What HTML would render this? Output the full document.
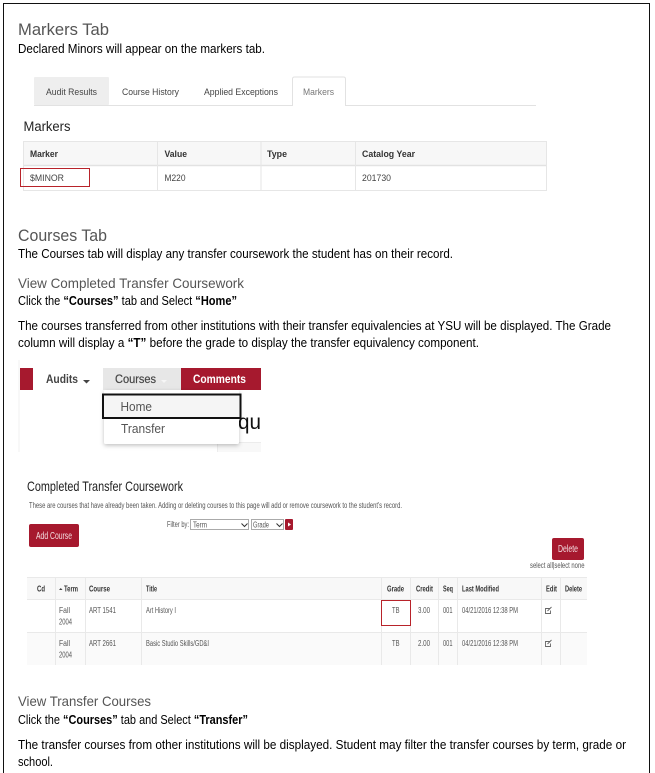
<!DOCTYPE html>
<html lang="en">
<head>
<meta charset="utf-8">
<title>Markers and Courses Tab</title>
<style>
html,body{margin:0;padding:0;background:#fff;width:655px;height:773px;overflow:hidden}
svg{display:block;font-family:"Liberation Sans",sans-serif}
text{white-space:pre;filter:blur(.25px)}
.h{fill:#555;font-size:16.5px}
.h2{fill:#555;font-size:14px}
.p{fill:#000;font-size:12.5px}
.t{fill:#444;font-size:9.5px}
.th{fill:#333;font-size:9px;font-weight:bold}
.s{fill:#555;font-size:8px}
.sb{fill:#333;font-size:8px;font-weight:bold}
</style>
</head>
<body>
<svg width="655" height="773" viewBox="0 0 655 773" xmlns="http://www.w3.org/2000/svg">
<defs>
<filter id="sh" x="-10%" y="-10%" width="120%" height="125%"><feDropShadow dx="0" dy="1.5" stdDeviation="2" flood-color="#000" flood-opacity=".25"/></filter>
</defs>
<rect width="655" height="773" fill="#fff"/>
<path d="M3.500 773V3.500H649.500V773" fill="none" stroke="#111" stroke-width="1"/>

<text class="h" x="18" y="35" textLength="91" lengthAdjust="spacingAndGlyphs">Markers Tab</text>
<text class="p" x="18" y="53" textLength="247" lengthAdjust="spacingAndGlyphs">Declared Minors will appear on the markers tab.</text>

<rect x="34" y="77" width="75" height="28" rx="1" fill="#eee"/>
<path d="M34 105.500H292M346 105.500H536" stroke="#e2e2e2"/>
<path d="M292.500 106V79q0-2 2-2H343.500q2 0 2 2V106" fill="#fff" stroke="#e2e2e2"/>
<text class="t" x="46" y="95" textLength="51" lengthAdjust="spacingAndGlyphs">Audit Results</text>
<text class="t" x="122" y="95" textLength="57" lengthAdjust="spacingAndGlyphs">Course History</text>
<text class="t" x="204" y="95" textLength="74" lengthAdjust="spacingAndGlyphs">Applied Exceptions</text>
<text class="t" x="303" y="95" textLength="31" lengthAdjust="spacingAndGlyphs" style="fill:#777">Markers</text>

<text x="23.500" y="131" font-size="13.500" fill="#222" textLength="47" lengthAdjust="spacingAndGlyphs">Markers</text>
<rect x="23.500" y="141.500" width="523" height="49" fill="#fff" stroke="#e6e6e6"/>
<rect x="24" y="142" width="522" height="23" fill="#f7f7f7"/>
<path d="M24 165.500H546" stroke="#e2e2e2" stroke-width="1.500"/>
<path d="M157.500 142V190M261 142V190M355.500 142V190" stroke="#e6e6e6"/>
<text class="th" x="30" y="157" textLength="28" lengthAdjust="spacingAndGlyphs">Marker</text>
<text class="th" x="164.500" y="157" textLength="22.500" lengthAdjust="spacingAndGlyphs">Value</text>
<text class="th" x="267" y="157" textLength="20" lengthAdjust="spacingAndGlyphs">Type</text>
<text class="th" x="362" y="157" textLength="53" lengthAdjust="spacingAndGlyphs">Catalog Year</text>
<text class="t" x="30" y="181" textLength="34" lengthAdjust="spacingAndGlyphs">$MINOR</text>
<text class="t" x="164.500" y="181" textLength="21" lengthAdjust="spacingAndGlyphs">M220</text>
<text class="t" x="362" y="181" textLength="29" lengthAdjust="spacingAndGlyphs">201730</text>
<rect x="20.500" y="168.500" width="69" height="18" fill="none" stroke="#b8232a" stroke-width="1"/>

<text class="h" x="18" y="241" textLength="89" lengthAdjust="spacingAndGlyphs">Courses Tab</text>
<text class="p" x="18" y="258" textLength="435" lengthAdjust="spacingAndGlyphs">The Courses tab will display any transfer coursework the student has on their record.</text>
<text class="h2" x="18" y="288" textLength="226" lengthAdjust="spacingAndGlyphs">View Completed Transfer Coursework</text>
<text class="p" x="18" y="305" textLength="219" lengthAdjust="spacingAndGlyphs">Click the <tspan font-weight="bold">“Courses”</tspan> tab and Select <tspan font-weight="bold">“Home”</tspan></text>
<text class="p" x="18" y="330" textLength="593" lengthAdjust="spacingAndGlyphs">The courses transferred from other institutions with their transfer equivalencies at YSU will be displayed. The Grade</text>
<text class="p" x="18" y="347" textLength="461" lengthAdjust="spacingAndGlyphs">column will display a <tspan font-weight="bold">“T”</tspan> before the grade to display the transfer equivalency component.</text>

<path d="M19 360V452" stroke="#f2f2f2"/>
<rect x="20" y="368" width="241" height="22" fill="#a6192e"/>
<rect x="33" y="368" width="70" height="22" fill="#fff"/>
<rect x="103" y="368" width="78" height="22" fill="#e7e7e7"/>
<text x="46" y="383" font-size="11.500" font-weight="bold" fill="#444" textLength="32" lengthAdjust="spacingAndGlyphs">Audits</text>
<path d="M83 380H90L86.500 383.500Z" fill="#444"/>
<text x="115" y="383" font-size="11.500" fill="#444" stroke="#444" stroke-width=".2" textLength="41" lengthAdjust="spacingAndGlyphs">Courses</text>
<path d="M161 380H167L164 383Z" fill="#f6f6f6"/>
<text x="193" y="383" font-size="11.500" font-weight="bold" fill="#fff" textLength="53" lengthAdjust="spacingAndGlyphs">Comments</text>

<rect x="217" y="442" width="44" height="10" fill="#f8f8f8"/>
<path d="M217.500 442V452M217 442.500H261" stroke="#ececec"/>
<text x="238" y="429" font-size="21" fill="#111" textLength="23" lengthAdjust="spacingAndGlyphs">qu</text>
<rect x="104" y="390" width="135" height="54" rx="2" fill="#fff" filter="url(#sh)"/>
<rect x="103" y="394.500" width="137.500" height="23.500" fill="#f5f5f5" stroke="#111" stroke-width="2"/>
<text x="120.500" y="411" font-size="13" fill="#555" textLength="31.500" lengthAdjust="spacingAndGlyphs">Home</text>
<text x="121" y="433" font-size="13" fill="#555" textLength="44" lengthAdjust="spacingAndGlyphs">Transfer</text>

<text x="27" y="491" font-size="14" fill="#222" textLength="156" lengthAdjust="spacingAndGlyphs">Completed Transfer Coursework</text>
<text class="s" x="29" y="508" textLength="373" lengthAdjust="spacingAndGlyphs">These are courses that have already been taken. Adding or deleting courses to this page will add or remove coursework to the student's record.</text>

<rect x="29" y="524" width="50" height="23" rx="2" fill="#a6192e"/>
<text x="36" y="539" font-size="10" fill="#f4dfe2" textLength="36" lengthAdjust="spacingAndGlyphs">Add Course</text>
<text class="s" x="167" y="527" textLength="22" lengthAdjust="spacingAndGlyphs">Filter by:</text>
<rect x="190.500" y="519.500" width="58" height="10" fill="#fff" stroke="#aaa"/>
<text class="s" x="193" y="527.500" textLength="14" lengthAdjust="spacingAndGlyphs">Term</text>
<path d="M241.500 523.500L244.500 526.500L247.500 523.500" fill="none" stroke="#333"/>
<rect x="251.500" y="519.500" width="32" height="10" fill="#fff" stroke="#aaa"/>
<text class="s" x="253" y="527.500" textLength="16" lengthAdjust="spacingAndGlyphs">Grade</text>
<path d="M276.500 523.500L279.500 526.500L282.500 523.500" fill="none" stroke="#333"/>
<rect x="285" y="519" width="8" height="11" rx="1" fill="#a6192e"/>
<path d="M288 522.500L291 524.500L288 526.500Z" fill="#fff"/>

<rect x="552" y="538" width="32" height="22" rx="2" fill="#a6192e"/>
<text x="558" y="552" font-size="10" fill="#f4dfe2" textLength="20" lengthAdjust="spacingAndGlyphs">Delete</text>
<text class="s" x="530" y="568" textLength="54.500" lengthAdjust="spacingAndGlyphs">select all|select none</text>

<rect x="27" y="577" width="560" height="88" fill="#fff"/>
<rect x="27" y="577" width="560" height="22.500" fill="#f8f8f8"/>
<rect x="27" y="632" width="560" height="33" fill="#fafafa"/>
<path d="M27 577.500H587M27 599.500H587M27 632.500H587" stroke="#e9e9e9"/>
<path d="M55.500 577V665M85.500 577V665M141.500 577V665M381.500 577V665M410.500 577V665M438.500 577V665M457.500 577V665M541.500 577V665M560.500 577V665" stroke="#e9e9e9"/>

<text class="sb" x="37" y="591.500" textLength="8" lengthAdjust="spacingAndGlyphs">Cd</text>
<path d="M59 590H62.500L60.750 588Z" fill="#444"/>
<text class="sb" x="64" y="591.500" textLength="14" lengthAdjust="spacingAndGlyphs">Term</text>
<text class="sb" x="89" y="591.500" textLength="21" lengthAdjust="spacingAndGlyphs">Course</text>
<text class="sb" x="146" y="591.500" textLength="11" lengthAdjust="spacingAndGlyphs">Title</text>
<text class="sb" x="387" y="591.500" textLength="17" lengthAdjust="spacingAndGlyphs">Grade</text>
<text class="sb" x="416" y="591.500" textLength="17" lengthAdjust="spacingAndGlyphs">Credit</text>
<text class="sb" x="443" y="591.500" textLength="10" lengthAdjust="spacingAndGlyphs">Seq</text>
<text class="sb" x="462" y="591.500" textLength="37" lengthAdjust="spacingAndGlyphs">Last Modified</text>
<text class="sb" x="546" y="591.500" textLength="11" lengthAdjust="spacingAndGlyphs">Edit</text>
<text class="sb" x="565" y="591.500" textLength="17" lengthAdjust="spacingAndGlyphs">Delete</text>

<text class="s" x="59" y="613" textLength="11" lengthAdjust="spacingAndGlyphs">Fall</text>
<text class="s" x="59" y="624.500" textLength="13" lengthAdjust="spacingAndGlyphs">2004</text>
<text class="s" x="89" y="613" textLength="27" lengthAdjust="spacingAndGlyphs">ART 1541</text>
<text class="s" x="146" y="613" textLength="30" lengthAdjust="spacingAndGlyphs">Art History I</text>
<text class="s" x="392" y="613" textLength="7.500" lengthAdjust="spacingAndGlyphs">TB</text>
<text class="s" x="418" y="613" textLength="12" lengthAdjust="spacingAndGlyphs">3.00</text>
<text class="s" x="443" y="613" textLength="9.500" lengthAdjust="spacingAndGlyphs">001</text>
<text class="s" x="462" y="613" textLength="56" lengthAdjust="spacingAndGlyphs">04/21/2016 12:38 PM</text>
<path d="M550 608.500H545.500V613.500H550.500V610.500M547.500 611L551.500 607" fill="none" stroke="#666" stroke-width=".9"/>

<text class="s" x="59" y="646" textLength="11" lengthAdjust="spacingAndGlyphs">Fall</text>
<text class="s" x="59" y="657.500" textLength="13" lengthAdjust="spacingAndGlyphs">2004</text>
<text class="s" x="89" y="646" textLength="27" lengthAdjust="spacingAndGlyphs">ART 2661</text>
<text class="s" x="146" y="646" textLength="63" lengthAdjust="spacingAndGlyphs">Basic Studio Skills/GD&amp;I</text>
<text class="s" x="392" y="646" textLength="7.500" lengthAdjust="spacingAndGlyphs">TB</text>
<text class="s" x="418" y="646" textLength="12" lengthAdjust="spacingAndGlyphs">2.00</text>
<text class="s" x="443" y="646" textLength="9.500" lengthAdjust="spacingAndGlyphs">001</text>
<text class="s" x="462" y="646" textLength="56" lengthAdjust="spacingAndGlyphs">04/21/2016 12:38 PM</text>
<path d="M550 641.500H545.500V646.500H550.500V643.500M547.500 644L551.500 640" fill="none" stroke="#666" stroke-width=".9"/>

<rect x="381.500" y="600.500" width="29" height="25" fill="none" stroke="#b8232a" stroke-width="1"/>

<text class="h2" x="18" y="706" textLength="133" lengthAdjust="spacingAndGlyphs">View Transfer Courses</text>
<text class="p" x="18" y="724" textLength="230" lengthAdjust="spacingAndGlyphs">Click the <tspan font-weight="bold">“Courses”</tspan> tab and Select <tspan font-weight="bold">“Transfer”</tspan></text>
<text class="p" x="18" y="749" textLength="608" lengthAdjust="spacingAndGlyphs">The transfer courses from other institutions will be displayed. Student may filter the transfer courses by term, grade or</text>
<text class="p" x="18" y="766" textLength="35" lengthAdjust="spacingAndGlyphs">school.</text>
</svg>
</body>
</html>
